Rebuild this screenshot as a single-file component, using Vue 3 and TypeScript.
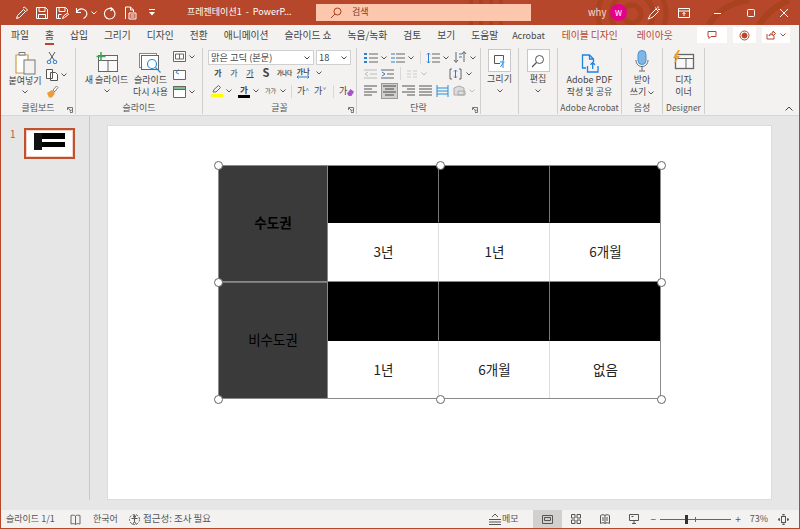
<script setup lang="ts">
const tabs = ['파일', '홈', '삽입', '그리기', '디자인', '전환', '애니메이션', '슬라이드 쇼', '녹음/녹화', '검토', '보기', '도움말', 'Acrobat']
const contextTabs = ['테이블 디자인', '레이아웃']

const cells = [
	{ text: '', dark: true },
	{ text: '', dark: true },
	{ text: '', dark: true },
	{ text: '3년', dark: false },
	{ text: '1년', dark: false },
	{ text: '6개월', dark: false },
	{ text: '', dark: true },
	{ text: '', dark: true },
	{ text: '', dark: true },
	{ text: '1년', dark: false },
	{ text: '6개월', dark: false },
	{ text: '없음', dark: false },
]

// selection handles of the table, in percent of its box
const handles = [
	{ left: 0, top: 0 },
	{ left: 50, top: 0 },
	{ left: 100, top: 0 },
	{ left: 0, top: 50 },
	{ left: 100, top: 50 },
	{ left: 0, top: 100 },
	{ left: 50, top: 100 },
	{ left: 100, top: 100 },
]
</script>

<template>
	<div class="window">
		<header class="titlebar">
			<svg class="pattern" width="340" height="25" viewBox="0 0 340 25" fill="none" stroke="#a8421f" stroke-width="5">
				<circle cx="173" cy="14" r="9" />
				<circle cx="173" cy="14" r="21" />
				<circle cx="173" cy="14" r="34" />
				<path d="M12 0v25M22 0v25M32 0v25M42 0v25" stroke-width="4" />
				<path d="M250 25c6-12 20-22 40-25M300 25c6-10 14-18 30-25" stroke-width="6" />
			</svg>
			<div class="qat">
				<svg width="14" height="14" viewBox="0 0 14 14" fill="none" stroke="#fff" stroke-width="1"><path d="M1.500 12.500l1-3 6-6 2 2-6 6zM8 2l1.500-1 3 3-1.500 1.500" /></svg>
				<svg width="14" height="14" viewBox="0 0 14 14" fill="none" stroke="#fff" stroke-width="1"><path d="M1.500 1.500h9l2 2v9h-11zM4 1.500v4h6v-4M3.500 12.500v-4h7v4" /></svg>
				<svg width="14" height="14" viewBox="0 0 14 14" fill="none" stroke="#fff" stroke-width="1"><path d="M1.500 1.500h9l2 2v3M6 12.500H1.500v-11M4 1.500v4h6v-4M3.500 12.500v-4h3M7.500 12.500l1-2.500 4-3 1 1.500-4 3z" /></svg>
				<span class="undo">
					<svg width="14" height="14" viewBox="0 0 14 14" fill="none" stroke="#fff" stroke-width="1.100"><path d="M1.500 2v4.500H6M1.500 6.500C3 3.500 6 2.500 8.500 3.200c3 1 4 4 3 6.300-.6 1.300-1.500 2.200-3 3" /></svg>
					<svg width="6" height="4" viewBox="0 0 6 4" fill="none" stroke="#fff"><path d="M.5.500L3 3 5.500.500" /></svg>
				</span>
				<svg width="14" height="14" viewBox="0 0 14 14" fill="none" stroke="#fff" stroke-width="1.100"><path d="M7.500 1.500l2.500 1.700-2.500 1.600M9.500 3.200A5.300 5.300 0 1 0 12 7.500a5 5 0 0 0-1.800-3.500" /></svg>
				<svg width="14" height="14" viewBox="0 0 14 14" fill="none" stroke="#fff" stroke-width="1"><path d="M2.500 13V1h5l3 3v2M7.500 1v3h3M6 7h7v6H6zM7.500 9h4M7.500 11h4" /></svg>
				<svg class="more" width="8" height="7" viewBox="0 0 8 7" fill="#fff"><path d="M1 0h6v1H1zM1 3h6L4 6.500z" /></svg>
			</div>
			<div class="doc-title">프레젠테이션1 &nbsp;-&nbsp; PowerP...</div>
			<div class="search">
				<svg width="12" height="12" viewBox="0 0 12 12" fill="none" stroke="#a5401f" stroke-width="1"><circle cx="7.500" cy="4.500" r="3.500" /><path d="M5 7L1 11" /></svg>
				<span>검색</span>
			</div>
			<div class="account">
				<span class="user">why</span>
				<span class="avatar">W</span>
				<svg class="pen" width="14" height="14" viewBox="0 0 14 14" fill="none" stroke="#fff"><path d="M1 13c1-1 1.500-3 2.500-4.500L9 3l2.500 2.500-5.500 5.500c-1.500 1-3.500 1.500-5 2zM8.500 1.500l1 1.500M11 .5v2M13 3.500h-2" /></svg>
			</div>
			<div class="win-btns">
				<svg width="12" height="10" viewBox="0 0 12 10" fill="none" stroke="#fff"><path d="M.5.500h11v9H.5zM.5 3h11" /><path d="M6 8V4.500M4.500 6L6 4.500 7.500 6" /></svg>
				<svg width="10" height="10" viewBox="0 0 10 10" fill="none" stroke="#fff"><path d="M1 5.500h7" /></svg>
				<svg width="10" height="10" viewBox="0 0 10 10" fill="none" stroke="#fff"><rect x="1.500" y="1.500" width="7" height="7" rx="1" /></svg>
				<svg width="10" height="10" viewBox="0 0 10 10" fill="none" stroke="#fff"><path d="M1 1l8 8M9 1L1 9" /></svg>
			</div>
		</header>

		<nav class="tabs">
			<span v-for="tab in tabs" :key="tab" class="tab" :class="{ active: tab === '홈', latin: tab === 'Acrobat' }">{{ tab }}</span>
			<span v-for="tab in contextTabs" :key="tab" class="tab context">{{ tab }}</span>
			<div class="tab-actions">
				<span class="tab-btn comment">
					<svg width="10" height="10" viewBox="0 0 10 10" fill="none" stroke="#b7472a"><path d="M1 1.500h8v5H4l-2 2v-2H1z" /></svg>
				</span>
				<span class="tab-btn rec">
					<svg width="11" height="11" viewBox="0 0 11 11" fill="none" stroke="#b7472a"><circle cx="5.500" cy="5.500" r="4.500" /><circle cx="5.500" cy="5.500" r="2.500" fill="#b7472a" /></svg>
				</span>
				<span class="tab-btn share">
					<svg width="10" height="10" viewBox="0 0 10 10" fill="none" stroke="#b7472a"><path d="M1 4v5h7V6M3 6c.5-2 2-3 4-3V1l2.500 2.500L7 6V4.500C5 4.500 4 5 3 6z" /></svg>
					<svg width="6" height="4" viewBox="0 0 6 4" fill="none" stroke="#b7472a"><path d="M.5.500L3 3 5.500.500" /></svg>
				</span>
			</div>
		</nav>

		<section class="ribbon">
			<div class="group g-clip">
				<div class="group-body">
					<div class="big paste">
						<svg width="21" height="24" viewBox="0 0 21 24" fill="none"><path d="M1 4h12v18H1z" fill="#fff" stroke="#d39a4a" stroke-width="1.200" /><path d="M4 4V1.500h6V4z" fill="#fff" stroke="#777" /><rect x="9" y="9" width="11" height="14" fill="#f3f2f1" stroke="#777" /></svg>
						<span>붙여넣기</span>
						<svg class="chev" width="6" height="4" viewBox="0 0 6 4" fill="none" stroke="#555"><path d="M.5.500L3 3 5.500.500" /></svg>
					</div>
					<div class="small-col">
						<svg width="12" height="13" viewBox="0 0 12 13" fill="none" stroke="#555"><path d="M3 1l5 8M9 1L4 9" /><circle cx="3" cy="11" r="1.800" stroke="#2b7cd3" /><circle cx="9" cy="11" r="1.800" stroke="#2b7cd3" /></svg>
						<span class="with-chev">
							<svg width="12" height="12" viewBox="0 0 12 12" fill="#fff" stroke="#555"><path d="M.5.500h6v9h-6zM4.500 3.500h5l2 2v6h-7z" /></svg>
							<svg class="chev" width="6" height="4" viewBox="0 0 6 4" fill="none" stroke="#555"><path d="M.5.500L3 3 5.500.500" /></svg>
						</span>
						<svg width="13" height="13" viewBox="0 0 13 13"><path d="M1 8l5-3 3 3-3 4.500H3z" fill="#ed9a3a" /><path d="M7 5l3.500-4L12 2.500 8.500 7z" fill="#fff" stroke="#666" stroke-width=".8" /></svg>
					</div>
				</div>
				<div class="group-label">클립보드<svg class="launcher" width="6" height="6" viewBox="0 0 6 6" fill="none" stroke="#777"><path d="M.5 3V.5h5v5H3M1 1l3 3M4 2.500V4H2.500" /></svg></div>
			</div>

			<div class="group g-slide">
				<div class="group-body">
					<div class="big new-slide">
						<svg width="22" height="20" viewBox="0 0 22 20" fill="none"><rect x="2.500" y="3.500" width="19" height="16" fill="#fafafa" stroke="#666" /><path d="M2.500 8.500h19M12 8.500v11" stroke="#666" /><path d="M5 0v9M.5 4.500h9" stroke="#3fa35a" stroke-width="1.500" /></svg>
						<span>새 슬라이드</span>
						<svg class="chev" width="6" height="4" viewBox="0 0 6 4" fill="none" stroke="#555"><path d="M.5.500L3 3 5.500.500" /></svg>
					</div>
					<div class="big reuse">
						<svg width="23" height="21" viewBox="0 0 23 21" fill="none"><rect x=".5" y=".5" width="17" height="14" fill="#fff" stroke="#888" /><rect x="2.500" y="2.500" width="17" height="14" fill="#fff" stroke="#666" /><circle cx="13" cy="11" r="4.500" stroke="#2b8fd6" stroke-width="1.200" fill="#fff" /><path d="M16.500 14.500l5 5" stroke="#2b8fd6" stroke-width="1.200" /></svg>
						<span>슬라이드<br />다시 사용</span>
					</div>
					<div class="small-col layout-col">
						<span class="with-chev">
							<svg width="13" height="11" viewBox="0 0 13 11" fill="#fff" stroke="#666"><path d="M.5.500h12v10H.5zM2.500 3h8v5h-8zM6.500 3v5" /></svg>
							<svg class="chev" width="6" height="4" viewBox="0 0 6 4" fill="none" stroke="#555"><path d="M.5.500L3 3 5.500.500" /></svg>
						</span>
						<svg width="13" height="12" viewBox="0 0 13 12" fill="#fff" stroke="#666"><path d="M.5 2.500h12v9H.5z" /><path d="M3 4.500L5.500 1.500M3 4.500l3 1.500" stroke="#2b7cd3" fill="none" /></svg>
						<span class="with-chev">
							<svg width="13" height="12" viewBox="0 0 13 12" fill="#fff" stroke="#666"><path d="M.5.500h12v11H.5z" /><path d="M.5.500h12v3H.5z" fill="#7fbf8a" /></svg>
							<svg class="chev" width="6" height="4" viewBox="0 0 6 4" fill="none" stroke="#555"><path d="M.5.500L3 3 5.500.500" /></svg>
						</span>
					</div>
				</div>
				<div class="group-label">슬라이드</div>
			</div>

			<div class="group g-font">
				<div class="group-body font-body">
					<div class="combo-row">
						<div class="combo name">맑은 고딕 (본문)<svg class="chev" width="6" height="4" viewBox="0 0 6 4" fill="none" stroke="#444"><path d="M.5.500L3 3 5.500.500" /></svg></div>
						<div class="combo size">18<svg class="chev" width="6" height="4" viewBox="0 0 6 4" fill="none" stroke="#444"><path d="M.5.500L3 3 5.500.500" /></svg></div>
					</div>
					<div class="font-row first">
						<b>가</b><i>가</i><u>가</u><b class="strike">S</b><small>가나다</small>
						<span class="spacing">가나<svg width="14" height="4" viewBox="0 0 14 4" fill="none" stroke="#2b7cd3"><path d="M1 2h12M2.500.5L1 2l1.500 1.500M11.500.5L13 2l-1.500 1.500" /></svg></span>
						<svg class="chev" width="6" height="4" viewBox="0 0 6 4" fill="none" stroke="#555"><path d="M.5.500L3 3 5.500.500" /></svg>
					</div>
					<div class="font-row second">
						<span class="color-btn">
							<svg width="12" height="8" viewBox="0 0 12 8" fill="none" stroke="#666"><path d="M2 7l1-2.500L7.500.500 9.500 2.500 5 7z" /></svg>
							<i class="swatch yellow" />
						</span>
						<svg class="chev" width="6" height="4" viewBox="0 0 6 4" fill="none" stroke="#555"><path d="M.5.500L3 3 5.500.500" /></svg>
						<span class="color-btn text-color">
							<b>가</b>
							<i class="swatch black" />
						</span>
						<svg class="chev" width="6" height="4" viewBox="0 0 6 4" fill="none" stroke="#555"><path d="M.5.500L3 3 5.500.500" /></svg>
						<small>가가</small>
						<svg class="chev" width="6" height="4" viewBox="0 0 6 4" fill="none" stroke="#555"><path d="M.5.500L3 3 5.500.500" /></svg>
						<span class="sep" />
						<span class="grow-btn">가<sup>^</sup></span>
						<span class="grow-btn">가<sup class="down">ˇ</sup></span>
						<span class="sep" />
						<span class="clear-fmt">가<svg width="7" height="7" viewBox="0 0 8 8"><path d="M0 5l4-5 4 3-3 5H2z" fill="#a855c8" /></svg></span>
					</div>
				</div>
				<div class="group-label">글꼴<svg class="launcher" width="6" height="6" viewBox="0 0 6 6" fill="none" stroke="#777"><path d="M.5 3V.5h5v5H3M1 1l3 3M4 2.500V4H2.500" /></svg></div>
			</div>

			<div class="group g-para">
				<div class="group-body para-body">
					<div class="para-row">
						<svg width="14" height="12" viewBox="0 0 14 12" stroke="#666"><path d="M5 2h9M5 6h9M5 10h9" /><path d="M0 2h3M0 6h3M0 10h3" stroke="#2b7cd3" stroke-width="2" /></svg>
						<svg class="chev" width="6" height="4" viewBox="0 0 6 4" fill="none" stroke="#555"><path d="M.5.500L3 3 5.500.500" /></svg>
						<svg width="14" height="12" viewBox="0 0 14 12" stroke="#666"><path d="M5 2h9M5 6h9M5 10h9" /><path d="M1 1v2M1 5v2M1 9v2M3 1v2M3 5v2M3 9v2" stroke="#2b7cd3" /></svg>
						<svg class="chev" width="6" height="4" viewBox="0 0 6 4" fill="none" stroke="#555"><path d="M.5.500L3 3 5.500.500" /></svg>
						<span class="sep" />
						<svg width="14" height="12" viewBox="0 0 14 12" stroke="#666"><path d="M6 2h8M6 6h8M6 10h8" /><path d="M2.500 1v10M1 2.500L2.500 1 4 2.500M1 9.500L2.500 11 4 9.500" stroke="#2b7cd3" fill="none" /></svg>
						<svg class="chev" width="6" height="4" viewBox="0 0 6 4" fill="none" stroke="#555"><path d="M.5.500L3 3 5.500.500" /></svg>
						<svg width="14" height="13" viewBox="0 0 14 13" fill="none" stroke="#666"><path d="M3 1v10M1 9l2 2.500L5 9M11 11V1M9 3l2-2.500L13 3" /><path d="M6 3h3M6 6h3" stroke="#2b7cd3" /></svg>
						<svg class="chev" width="6" height="4" viewBox="0 0 6 4" fill="none" stroke="#555"><path d="M.5.500L3 3 5.500.500" /></svg>
					</div>
					<div class="para-row indent-row">
						<svg width="13" height="10" viewBox="0 0 13 10" stroke="#bbb"><path d="M0 1h13M6 5h7M0 9h13M4 3L1 5l3 2" fill="none" /></svg>
						<svg width="13" height="10" viewBox="0 0 13 10" stroke="#666"><path d="M0 1h13M6 5h7M0 9h13" /><path d="M1 3l3 2-3 2" fill="none" stroke="#2b7cd3" /></svg>
						<span class="sep" />
						<svg width="10" height="8" viewBox="0 0 10 8" stroke="#ccc"><path d="M0 1h4M6 1h4M0 4h4M6 4h4M0 7h4M6 7h4" /></svg>
						<svg class="chev" width="6" height="4" viewBox="0 0 6 4" fill="none" stroke="#bbb"><path d="M.5.500L3 3 5.500.500" /></svg>
						<span class="grow" />
						<svg width="13" height="12" viewBox="0 0 13 12" fill="none" stroke="#666"><path d="M1 1h2M10 1h2M1 1v10h2M12 1v10h-2" /><path d="M6.500 2v8M5 3.500L6.500 2 8 3.500M5 8.500L6.500 10 8 8.500" stroke="#2b7cd3" /></svg>
						<svg class="chev" width="6" height="4" viewBox="0 0 6 4" fill="none" stroke="#555"><path d="M.5.500L3 3 5.500.500" /></svg>
					</div>
					<div class="para-row align-row">
						<svg width="13" height="11" viewBox="0 0 13 11" stroke="#555"><path d="M0 1h13M0 4h8M0 7h13M0 10h8" /></svg>
						<span class="pressed"><svg width="13" height="11" viewBox="0 0 13 11" stroke="#444"><path d="M0 1h13M2 4h9M0 7h13M2 10h9" /></svg></span>
						<svg width="13" height="11" viewBox="0 0 13 11" stroke="#555"><path d="M0 1h13M5 4h8M0 7h13M5 10h8" /></svg>
						<svg width="13" height="11" viewBox="0 0 13 11" stroke="#555"><path d="M0 1h13M0 4h13M0 7h13M0 10h13" /></svg>
						<svg width="13" height="12" viewBox="0 0 13 12" fill="none" stroke="#2b8fd6"><path d="M1 0v12M12 0v12M1 3h11M1 6h11M1 9h11" /></svg>
						<span class="with-chev">
							<svg width="13" height="11" viewBox="0 0 13 11" fill="#ddd" stroke="#aaa"><path d="M1 10V3l5-2 5 2v7zM5 6h7v4H5z" /></svg>
							<svg class="chev" width="6" height="4" viewBox="0 0 6 4" fill="none" stroke="#bbb"><path d="M.5.500L3 3 5.500.500" /></svg>
						</span>
					</div>
				</div>
				<div class="group-label">단락<svg class="launcher" width="6" height="6" viewBox="0 0 6 6" fill="none" stroke="#777"><path d="M.5 3V.5h5v5H3M1 1l3 3M4 2.500V4H2.500" /></svg></div>
			</div>

			<div class="group g-draw">
				<div class="group-body">
					<div class="big framed">
						<span class="frame">
							<svg width="14" height="14" viewBox="0 0 14 14" fill="none" stroke="#555"><path d="M7 9.500H1.500v-8h9V6" /><path d="M7 8h4.500M10 6v8M10 9l-2.500 4" stroke="#2b8fd6" /></svg>
						</span>
						<span>그리기</span>
						<svg class="chev" width="6" height="4" viewBox="0 0 6 4" fill="none" stroke="#555"><path d="M.5.500L3 3 5.500.500" /></svg>
					</div>
				</div>
				<div class="group-label" />
			</div>

			<div class="group g-edit">
				<div class="group-body">
					<div class="big framed">
						<span class="frame">
							<svg width="14" height="14" viewBox="0 0 14 14" fill="none" stroke="#555"><circle cx="8.500" cy="5.500" r="4" /><path d="M5.500 8.500L1 13" stroke-width="1.300" /></svg>
						</span>
						<span>편집</span>
						<svg class="chev" width="6" height="4" viewBox="0 0 6 4" fill="none" stroke="#555"><path d="M.5.500L3 3 5.500.500" /></svg>
					</div>
				</div>
				<div class="group-label" />
			</div>

			<div class="group g-acro">
				<div class="group-body">
					<div class="big pdf">
						<svg width="18" height="19" viewBox="0 0 18 19" fill="none" stroke="#1f83e0" stroke-width="1.300"><path d="M5 14H1.500V1h7l4 4v3M8.500 1v4h4" /><path d="M6.500 12v6h10.500v-6M11.700 15V8.500M9.500 10.700l2.200-2.200 2.200 2.200" /></svg>
						<span>Adobe PDF<br />작성 및 공유</span>
					</div>
				</div>
				<div class="group-label latin">Adobe Acrobat</div>
			</div>

			<div class="group g-voice">
				<div class="group-body">
					<div class="big mic">
						<svg width="14" height="22" viewBox="0 0 14 22"><rect x="3" y=".5" width="8" height="14" rx="4" fill="#7fb6e6" stroke="#4a90d0" /><path d="M1 10c0 4 2.500 6.500 6 6.500s6-2.500 6-6.500M7 16.500v4M4 21h6" fill="none" stroke="#666" /></svg>
						<span>받아<br />쓰기 <svg class="inline-chev" width="6" height="4" viewBox="0 0 6 4" fill="none" stroke="#555"><path d="M.5.500L3 3 5.500.500" /></svg></span>
					</div>
				</div>
				<div class="group-label">음성</div>
			</div>

			<div class="group g-design">
				<div class="group-body">
					<div class="big designer">
						<svg width="23" height="20" viewBox="0 0 23 20"><rect x="3.500" y="4.500" width="18" height="14" fill="#f8f8f8" stroke="#666" stroke-width="1.300" /><path d="M3.500 8.500h18M14 8.500v10" stroke="#666" fill="none" /><path d="M6 0L1 8h3L2 14l6-8H5l3-6z" fill="#f0a030" /></svg>
						<span>디자<br />이너</span>
					</div>
				</div>
				<div class="group-label latin">Designer</div>
			</div>

			<div class="ribbon-end">
				<svg width="8" height="5" viewBox="0 0 8 5" fill="none" stroke="#444"><path d="M.5 4.500L4 1l3.500 3.500" /></svg>
			</div>
		</section>

		<main class="workspace">
			<aside class="thumbs">
				<span class="thumb-no">1</span>
				<div class="thumb">
					<div class="thumb-table">
						<i class="t-side" />
						<i class="t-row" />
						<i class="t-gap" />
						<i class="t-row" />
					</div>
				</div>
			</aside>
			<div class="editor">
				<div class="slide">
					<div class="table-wrap">
						<div class="table">
							<div class="head-cell first">수도권</div>
							<div class="head-cell second">비수도권</div>
							<div v-for="(cell, i) in cells" :key="i" class="cell" :class="{ black: cell.dark }">{{ cell.text }}</div>
						</div>
						<span
							v-for="(h, i) in handles"
							:key="i"
							class="handle"
							:style="{ left: h.left + '%', top: h.top + '%' }"
						/>
					</div>
				</div>
			</div>
		</main>

		<footer class="statusbar">
			<span class="s-slide">슬라이드 1/1</span>
			<svg class="s-book" width="11" height="11" viewBox="0 0 11 11" fill="none" stroke="#666"><path d="M5.500 2C4.500 1 2.500 1 1 1.500V10c1.500-.5 3.500-.5 4.500.5 1-1 3-1 4.500-.5V1.500C8.500 1 6.500 1 5.500 2zM5.500 2v8.500" /></svg>
			<span class="s-lang">한국어</span>
			<svg class="s-access" width="13" height="13" viewBox="0 0 13 13" fill="none" stroke="#555"><circle cx="6.500" cy="6.500" r="5" stroke-dasharray="2 1.500" /><circle cx="6.500" cy="3.500" r="1" fill="#555" /><path d="M3.500 5.500h6M6.500 5.500v3M6.500 8.500l-2 3M6.500 8.500l2 3" /></svg>
			<span class="s-check">접근성: 조사 필요</span>
			<span class="grow" />
			<svg width="12" height="12" viewBox="0 0 12 12" fill="none" stroke="#555"><path d="M3 4l3-3 3 3M0 6.500h12M0 9h12M0 11.500h12" /></svg>
			<span class="s-notes">메모</span>
			<span class="view active">
				<svg width="11" height="9" viewBox="0 0 11 9" fill="none" stroke="#555"><path d="M.5.500h10v8H.5zM2.500 2.500h6v3h-6z" /></svg>
			</span>
			<span class="view">
				<svg width="10" height="10" viewBox="0 0 10 10" fill="none" stroke="#555"><path d="M.5.500h3.500v3.500H.5zM6 .5h3.500v3.500H6zM.5 6h3.500v3.500H.5zM6 6h3.500v3.500H6z" /></svg>
			</span>
			<span class="view">
				<svg width="10" height="10" viewBox="0 0 10 10" fill="none" stroke="#555"><path d="M.5 1.500C2 .5 4 .5 5 1.500c1-1 3-1 4.500 0v8C8 8.500 6 8.500 5 9.500c-1-1-3-1-4.500 0zM5 1.500v8M2 4h2M6 4h2M2 6h2M6 6h2" /></svg>
			</span>
			<span class="view">
				<svg width="10" height="10" viewBox="0 0 10 10" fill="none" stroke="#555"><path d="M.5.500h9v6h-9zM5 6.500v3M3 9.500h4M2.500 2.500h2" /></svg>
			</span>
			<div class="zoom">
				<span class="zoom-sign">−</span>
				<div class="zoom-track"><i class="zoom-mid" /><i class="zoom-thumb" /></div>
				<span class="zoom-sign">+</span>
			</div>
			<span class="s-percent">73%</span>
			<svg width="11" height="11" viewBox="0 0 11 11" fill="none" stroke="#555"><rect x="3.500" y="2.500" width="4" height="6" /><path d="M5.500 0L4.500 1h2zM5.500 11l-1-1h2zM0 5.500L1.500 4.500v2zM11 5.500L9.500 4.500v2z" fill="#555" /></svg>
		</footer>
	</div>
</template>

<style scoped>
.window {
	width: 800px;
	height: 529px;
	box-sizing: border-box;
	padding: 0 1px 1px;
	background-color: #b7472a;
	display: flex;
	flex-direction: column;
	overflow: hidden;
	font-family: "Noto Sans CJK KR", "Noto Sans", sans-serif;
	font-size: 9px;
	color: #444;
	line-height: 1.2;
}

svg {
	display: block;
	flex: none;
}

.titlebar {
	position: relative;
	height: 25px;
	flex: none;
	display: flex;
	align-items: center;
	color: #fff;
}

.pattern {
	position: absolute;
	right: 0;
	top: 0;
}

.qat {
	display: flex;
	align-items: center;
	gap: 6px;
	padding-left: 14px;
	width: 186px;
	flex: none;
	box-sizing: border-box;
}

.undo {
	display: flex;
	align-items: center;
	gap: 2px;
}

.more {
	margin-left: 5px;
}

.doc-title {
	width: 129px;
	flex: none;
	font-size: 9px;
	white-space: nowrap;
	position: relative;
}

.search {
	width: 215px;
	height: 17px;
	flex: none;
	display: flex;
	align-items: center;
	gap: 10px;
	padding-left: 14px;
	box-sizing: border-box;
	background-color: #fdc7ad;
	color: #7a3a24;
	font-size: 9px;
	position: relative;
}

.account {
	display: flex;
	align-items: center;
	margin-left: 57px;
	flex: none;
	position: relative;
}

.user {
	font-size: 9.500px;
	width: 16px;
	color: #f6ded5;
}

.avatar {
	width: 17px;
	height: 17px;
	margin-left: 6px;
	border-radius: 50%;
	background-color: #e3008c;
	font-size: 8px;
	display: flex;
	align-items: center;
	justify-content: center;
}

.pen {
	margin-left: 20px;
}

.win-btns {
	margin-left: 17px;
	display: flex;
	align-items: center;
	gap: 23px;
	flex: none;
	position: relative;
}

.tabs {
	height: 21px;
	flex: none;
	display: flex;
	align-items: center;
	gap: 16px;
	padding: 1px 0 0 10px;
	box-sizing: border-box;
	background-color: #f3f2f1;
}

.tab {
	position: relative;
	font-size: 9.750px;
	white-space: nowrap;
	color: #444;
}

.tab.latin {
	font-size: 9px;
	margin-left: -2px;
}

.tab.active::after {
	content: "";
	position: absolute;
	left: 0;
	right: 0;
	bottom: -3px;
	height: 2px;
	background-color: #b7472a;
}

.context {
	color: #b7472a;
	margin-left: 1px;
}

.context:last-of-type {
	margin-left: 3px;
}

.tab-actions {
	margin-left: auto;
	padding-right: 9px;
	display: flex;
	gap: 6px;
	align-self: flex-end;
}

.tab-btn {
	height: 16px;
	background-color: #fff;
	display: flex;
	align-items: center;
	justify-content: center;
	gap: 4px;
	margin-bottom: 3px;
}

.comment {
	width: 30px;
}

.rec {
	width: 23px;
}

.share {
	width: 28px;
}

.ribbon {
	height: 70px;
	flex: none;
	display: flex;
	background-color: #f3f2f1;
	border-bottom: 1px solid #d6d6d6;
	box-sizing: border-box;
}

.group {
	display: flex;
	flex-direction: column;
	box-sizing: border-box;
	border-right: 1px solid #d0d0d0;
	margin: 2px 0 1px;
	flex: none;
}

.group-body {
	flex: 1;
	display: flex;
	min-height: 0;
}

.group-label {
	position: relative;
	height: 13px;
	font-size: 9px;
	line-height: 13px;
	text-align: center;
	color: #555;
	white-space: nowrap;
}

.group-label.latin {
	font-size: 8.500px;
}

.launcher {
	position: absolute;
	right: 2px;
	bottom: 1px;
}

.g-clip {
	width: 75px;
}

.g-slide {
	width: 127px;
}

.g-font {
	width: 154px;
}

.g-para {
	width: 124px;
}

.g-draw {
	width: 38px;
}

.g-edit {
	width: 39px;
}

.g-acro {
	width: 64px;
}

.g-voice {
	width: 41px;
}

.g-design {
	width: 42px;
}

.ribbon-end {
	flex: 1;
	display: flex;
	justify-content: flex-end;
	align-items: flex-end;
	padding: 0 6px 4px 0;
}

.big {
	display: flex;
	flex-direction: column;
	align-items: center;
	text-align: center;
	white-space: nowrap;
	line-height: 12px;
	font-size: 9px;
}

.big .chev {
	margin-top: 3px;
}

.paste {
	width: 42px;
	margin-left: 3px;
	padding-top: 3px;
}

.small-col {
	display: flex;
	flex-direction: column;
	align-items: flex-start;
	justify-content: space-between;
	padding-top: 3px;
	height: 50px;
	box-sizing: border-box;
}

.with-chev {
	display: flex;
	align-items: center;
	gap: 3px;
}

.new-slide {
	width: 47px;
	margin-left: 7px;
	padding-top: 4px;
}

.new-slide > span {
	margin-top: 2px;
}

.reuse {
	width: 41px;
	padding-top: 5px;
}

.layout-col {
	margin-left: 2px;
}

.font-body {
	flex-direction: column;
	padding: 2px 0 0 5px;
}

.combo-row {
	display: flex;
	gap: 2px;
}

.combo {
	height: 15px;
	box-sizing: border-box;
	background-color: #fff;
	border: 1px solid #d0d0d0;
	display: flex;
	align-items: center;
	justify-content: space-between;
	padding: 0 3px 0 2px;
	font-size: 9.250px;
	white-space: nowrap;
}

.name {
	width: 106px;
}

.size {
	width: 35px;
}

.font-row {
	display: flex;
	align-items: center;
	height: 16px;
	font-size: 8px;
}

.font-row.first {
	padding-left: 5px;
	gap: 6px;
}

.font-row.first b,
.font-row.first i,
.font-row.first u {
	font-weight: 400;
	font-style: normal;
	width: 10px;
	text-align: center;
}

.font-row.first b {
	font-weight: 700;
}

.font-row .strike {
	font-size: 11px;
}

.font-row.first small {
	font-size: 5.500px;
	white-space: nowrap;
}

.spacing {
	display: flex;
	flex-direction: column;
	align-items: center;
	font-size: 7px;
	line-height: 8px;
	margin-left: -2px;
}

.font-row.second {
	margin-top: 2px;
	padding-left: 3px;
	gap: 3px;
}

.font-row.second small {
	font-size: 6px;
	width: 12px;
	margin-left: 3px;
	white-space: nowrap;
}

.color-btn {
	display: flex;
	flex-direction: column;
	align-items: center;
	width: 12px;
	line-height: 9px;
}

.color-btn b {
	font-size: 8.500px;
}

.swatch {
	width: 12px;
	height: 3px;
	margin-top: 1px;
	display: block;
}

.yellow {
	background-color: #ffff00;
}

.black {
	background-color: #000;
}

.text-color {
	margin-left: 3px;
}

.sep {
	width: 1px;
	height: 13px;
	background-color: #d8d8d8;
	margin: 0 2px;
	flex: none;
}

.grow-btn {
	font-size: 9px;
	display: flex;
	width: 14px;
}

.grow-btn sup {
	font-size: 7px;
	color: #2b8fd6;
	line-height: 8px;
}

.clear-fmt {
	display: flex;
	align-items: flex-end;
	font-size: 9px;
}

.para-body {
	flex-direction: column;
	padding: 3px 4px 0 7px;
	gap: 3px;
}

.para-row {
	display: flex;
	align-items: center;
	gap: 3px;
	height: 13px;
}

.para-row .chev {
	margin-right: 1px;
}

.indent-row {
	gap: 4px;
	padding-right: 3px;
}

.grow {
	flex: 1;
}

.align-row {
	gap: 4px;
	height: 15px;
}

.pressed {
	width: 17px;
	height: 16px;
	flex: none;
	display: flex;
	align-items: center;
	justify-content: center;
	background-color: #d2d0ce;
	border: 1px solid #999;
	box-sizing: border-box;
}

.framed {
	width: 100%;
	padding-top: 1px;
}

.frame {
	width: 23px;
	height: 23px;
	box-sizing: border-box;
	border: 1px solid #c8c8c8;
	background-color: #fff;
	display: flex;
	align-items: center;
	justify-content: center;
}

.framed > span:not(.frame) {
	margin-top: 1px;
}

.framed .chev {
	margin-top: 4px;
}

.pdf,
.mic,
.designer {
	width: 100%;
	padding-top: 6px;
}

.pdf > span {
	margin-top: 1px;
}

.mic {
	padding-top: 2px;
}

.mic > span {
	margin-top: 2px;
}

.inline-chev {
	display: inline-block;
	vertical-align: middle;
}

.designer {
	padding-top: 2px;
}

.designer > span {
	margin-top: 4px;
}

.workspace {
	flex: 1;
	min-height: 0;
	display: flex;
	background-color: #e6e6e6;
}

.thumbs {
	width: 89px;
	flex: none;
	box-sizing: border-box;
	border-right: 1px solid #c8c8c8;
	margin-bottom: 10px;
	padding: 12px 0 0 9px;
	display: flex;
	align-items: flex-start;
	gap: 8px;
}

.thumb-no {
	font-size: 10px;
	color: #c8553a;
}

.thumb {
	width: 51px;
	height: 31px;
	box-sizing: border-box;
	border: 2px solid #c1502f;
	outline: 1px solid #f0d4cb;
	outline-offset: -3px;
	background-color: #fff;
	padding: 3px 0 0 8px;
}

.thumb-table {
	width: 31px;
	height: 17px;
	display: grid;
	grid-template-columns: 8px 1fr;
	grid-template-rows: 6px 3px 5px 3px;
}

.t-side {
	grid-row: 1 / 5;
	background-color: #111;
}

.t-row {
	background-color: #000;
}

.t-gap {
	background-color: #fff;
}

.editor {
	flex: 1;
	display: flex;
	padding: 9px 27px 10px 17px;
	min-width: 0;
}

.slide {
	flex: 1;
	background-color: #fff;
	border: 1px solid #dcdcdc;
	box-sizing: border-box;
	padding: 39px 0 0 110px;
}

.table-wrap {
	position: relative;
	width: 443px;
	height: 234px;
}

.table {
	width: 443px;
	height: 234px;
	display: grid;
	grid-template-columns: 110px repeat(3, 111px);
	grid-template-rows: 58px 59px 59px 58px;
	box-sizing: border-box;
	outline: 1px solid #8a8a8a;
	outline-offset: -1px;
	font-size: 13.500px;
	color: #222;
}

.head-cell {
	grid-column: 1;
	padding-bottom: 3px;
	background-color: #3a3a3a;
	border: 1px solid #888;
	box-sizing: border-box;
	display: flex;
	align-items: center;
	justify-content: center;
	color: #000;
}

.first {
	grid-row: 1 / 3;
	font-weight: 700;
}

.second {
	grid-row: 3 / 5;
	border-top-color: #777;
}

.cell {
	display: flex;
	align-items: center;
	justify-content: center;
	box-sizing: border-box;
	padding: 0 0 1px 1px;
	border-right: 1px solid #dcdcdc;
	border-bottom: 1px solid #dcdcdc;
	background-color: #fff;
}

.cell:nth-child(6),
.cell:nth-child(7),
.cell:nth-child(8),
.cell:nth-child(12),
.cell:nth-child(13),
.cell:nth-child(14) {
	border-bottom-color: #8a8a8a;
}

.cell.black {
	background-color: #000;
	border-right-color: #777;
	border-bottom-color: #000;
}

.handle {
	position: absolute;
	width: 9px;
	height: 9px;
	margin: -4px 0 0 -4px;
	box-sizing: border-box;
	border-radius: 50%;
	border: 1px solid #666;
	background-color: #fff;
}

.statusbar {
	height: 18px;
	flex: none;
	display: flex;
	align-items: center;
	background-color: #f3f2f1;
	padding: 0 10px 0 5px;
	font-size: 9px;
	color: #555;
	white-space: nowrap;
}

.s-slide {
	width: 64px;
}

.s-book {
	margin-right: 12px;
}

.s-lang {
	width: 35px;
}

.s-check {
	margin-left: 2px;
	font-size: 9.500px;
}

.s-notes {
	margin: 0 14px 0 1px;
}

.view {
	width: 29px;
	height: 18px;
	display: flex;
	align-items: center;
	justify-content: center;
}

.view.active {
	background-color: #d2d0ce;
}

.zoom {
	display: flex;
	align-items: center;
	gap: 3px;
	margin-left: 2px;
}

.zoom-sign {
	font-size: 10px;
}

.zoom-track {
	position: relative;
	width: 71px;
	height: 1px;
	background-color: #666;
	margin: 0 1px;
}

.zoom-mid {
	position: absolute;
	left: 35px;
	top: -2px;
	width: 1px;
	height: 5px;
	background-color: #666;
}

.zoom-thumb {
	position: absolute;
	left: 25px;
	top: -4px;
	width: 3px;
	height: 9px;
	background-color: #333;
}

.s-percent {
	margin: 0 10px 0 9px;
}
</style>

<style>
html,
body {
	margin: 0;
	background-color: #b7472a;
}
</style>
